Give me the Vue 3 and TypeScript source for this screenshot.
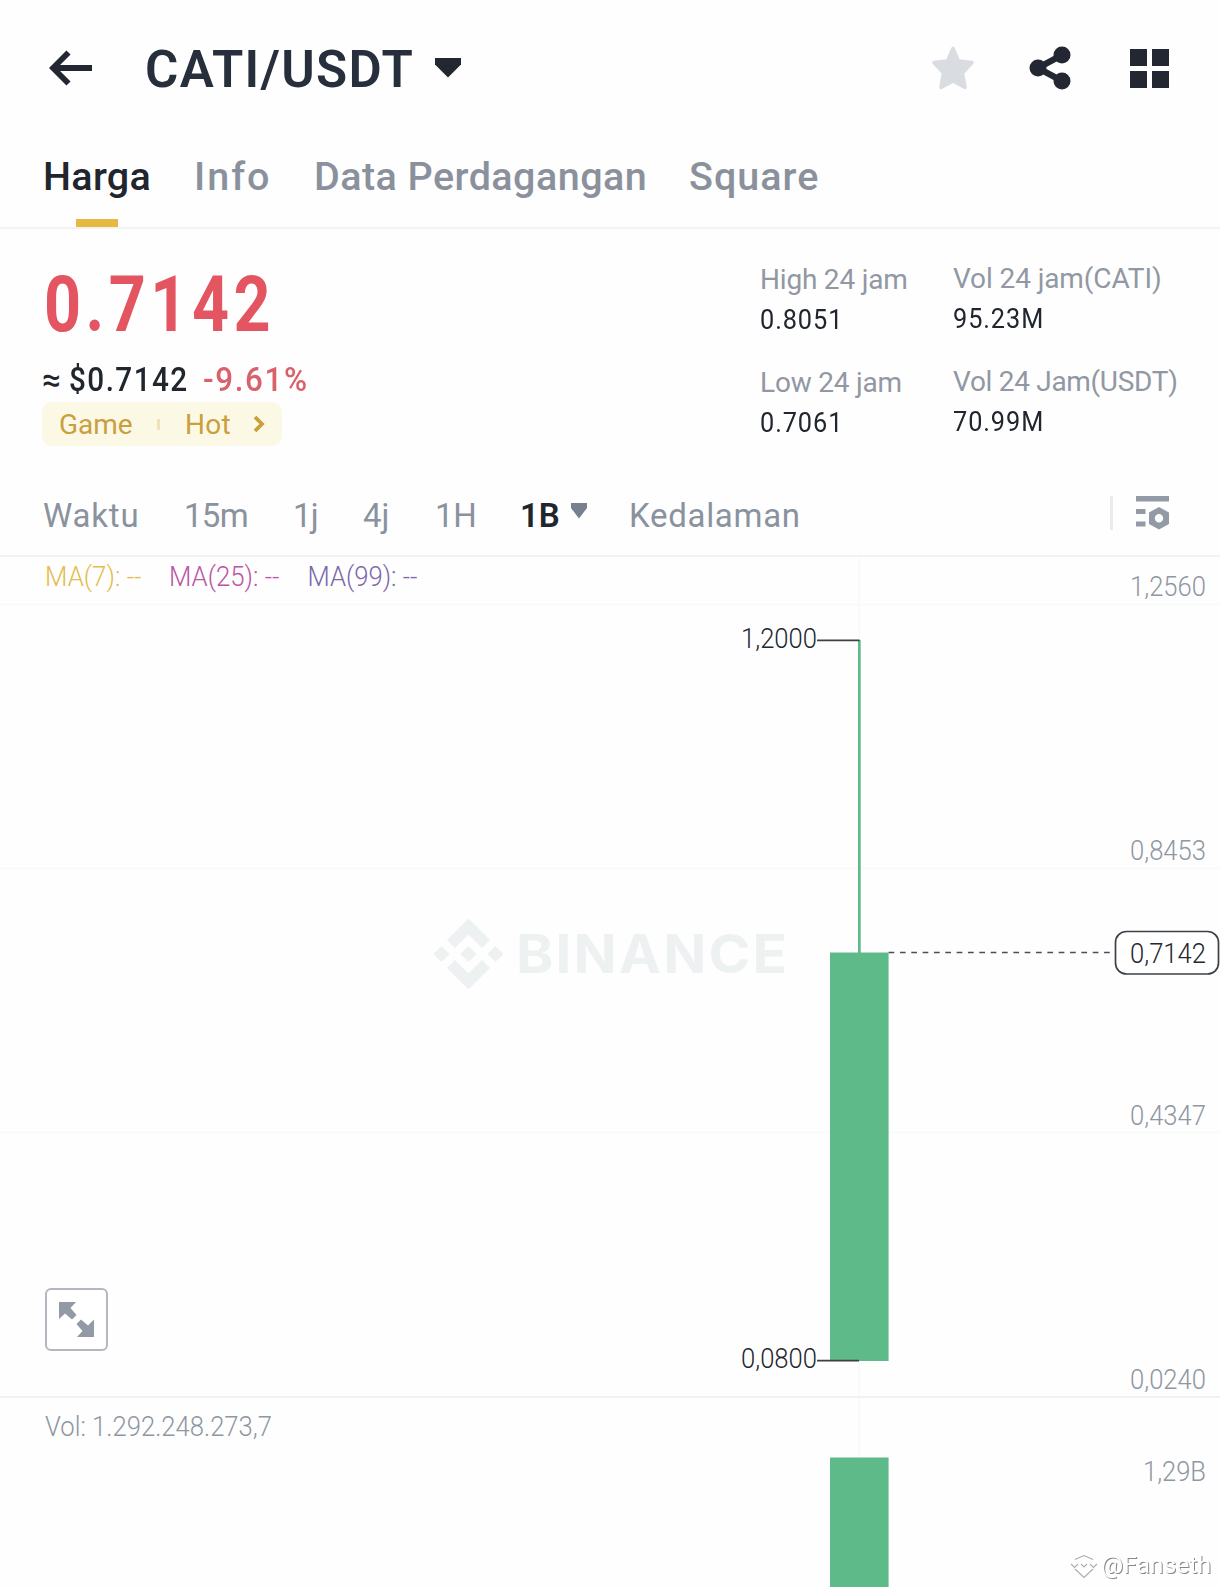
<script setup lang="ts">
interface Item { id: string; label: string; active?: boolean }

const tabs: Item[] = [
  { id: 'price', label: 'Harga', active: true },
  { id: 'info', label: 'Info' },
  { id: 'trades', label: 'Data Perdagangan' },
  { id: 'square', label: 'Square' },
]

const intervals: Item[] = [
  { id: 'time', label: 'Waktu' },
  { id: 'm15', label: '15m' },
  { id: 'h1', label: '1j' },
  { id: 'h4', label: '4j' },
  { id: 'd1', label: '1H' },
  { id: 'mo1', label: '1B', active: true },
  { id: 'depth', label: 'Kedalaman' },
]

const stats = [
  { id: 'high', label: 'High 24 jam', value: '0.8051' },
  { id: 'vol-base', label: 'Vol 24 jam(CATI)', value: '95.23M' },
  { id: 'low', label: 'Low 24 jam', value: '0.7061' },
  { id: 'vol-quote', label: 'Vol 24 Jam(USDT)', value: '70.99M' },
]

const averages = [
  { text: 'MA(7): --', x: 45, width: 96.5, color: '#e3bd4f' },
  { text: 'MA(25): --', x: 169, width: 110.5, color: '#bb55a4' },
  { text: 'MA(99): --', x: 307.5, width: 110, color: '#7c68ab' },
]

const axis = [
  { text: '1,2560', y: 595.5, width: 76 },
  { text: '0,8453', y: 860, width: 76 },
  { text: '0,4347', y: 1124.5, width: 76 },
  { text: '0,0240', y: 1388.7, width: 76 },
  { text: '1,29B', y: 1480.7, width: 63 },
]
const gridRows = [604.5, 868.5, 1132.5]
</script>

<template>
  <main class="screen">
    <header class="header">
      <svg class="back" width="44" height="36" viewBox="0 0 44 36" fill="none" stroke="#222731" stroke-width="5.8">
        <path d="M43 18H4M19.500 2.500L4 18L19.500 33.500" />
      </svg>
      <h1 class="pair">CATI/USDT</h1>
      <svg class="caret" width="26" height="20" viewBox="0 0 26 20"><path d="M0 0h26v6.500L13 19.500 0 6.500z" fill="#222731" /></svg>
      <div class="actions">
        <svg width="42" height="44" viewBox="0 0 42 44">
          <path d="M21 2.500L26.500 15L40 16.500L30.500 27L33 41.500L21 35L9 41.500L11.500 27L2 16.500L15.500 15Z" fill="#d9dce1" stroke="#d9dce1" stroke-width="3.600" stroke-linejoin="round" />
        </svg>
        <svg width="42" height="44" viewBox="0 0 42 44" fill="#222731">
          <path d="M33 9L9 22L33 35" fill="none" stroke="#222731" stroke-width="6.500" />
          <circle cx="33" cy="9" r="8.500" /><circle cx="9" cy="22" r="8.500" /><circle cx="33" cy="35" r="8.500" />
        </svg>
        <svg width="39" height="39" viewBox="0 0 39 39" fill="#222731">
          <path d="M0 0h17v17H0zM22 0h17v17H22zM0 22h17v17H0zM22 22h17v17H22z" />
        </svg>
      </div>
    </header>

    <nav class="tabs">
      <a v-for="t in tabs" :key="t.id" class="tab" :class="[t.id, { active: t.active }]">{{ t.label }}</a>
    </nav>

    <section class="summary">
      <div class="quote">
        <div class="last">0.7142</div>
        <div class="fiat"><span class="approx">≈</span><span class="usd">$0.7142</span><span class="change">-9.61%</span></div>
        <div class="tags">
          <span class="game">Game</span><i class="tag-sep"></i><span class="hot">Hot</span>
          <svg width="12" height="18" viewBox="0 0 12 18" fill="none" stroke="#c9a03c" stroke-width="3.800"><path d="M2 2L9 9L2 16" /></svg>
        </div>
      </div>
      <dl class="stats">
        <div v-for="s in stats" :key="s.id" class="stat" :class="s.id">
          <dt>{{ s.label }}</dt>
          <dd>{{ s.value }}</dd>
        </div>
      </dl>
    </section>

    <nav class="intervals">
      <a v-for="i in intervals" :key="i.id" class="interval" :class="[i.id, { active: i.active }]">
        <span>{{ i.label }}</span>
        <svg v-if="i.active" width="16" height="16" viewBox="0 0 16 16"><path d="M0 0h16v5L8 15.500 0 5z" fill="#76808f" /></svg>
      </a>
      <i class="divider"></i>
      <svg class="settings" width="34" height="36" viewBox="0 0 34 36" fill="#929aa5">
        <path d="M0 1h33v5.500H0zM0 14h9.500v5H0zM0 26.500h9.500v5H0z" />
        <path fill-rule="evenodd" d="M23 12L33 17.500V29L23 34.500L13 29V17.500ZM23 19a4.200 4.200 0 1 0 0 8.400a4.200 4.200 0 1 0 0-8.400Z" />
      </svg>
    </nav>

    <section class="chart">
      <svg class="plot" width="1220" height="1030" viewBox="0 557 1220 1030">
        <g stroke="#f8f9f9" stroke-width="1.500">
          <path v-for="y in gridRows" :key="y" :d="`M0 ${y}H1220`" />
          <path d="M859.200 557V1587" />
        </g>
        <path d="M0 1397H1220" stroke="#f0f1f3" stroke-width="2" />

        <text v-for="m in averages" :key="m.text" :x="m.x" y="585.700" :fill="m.color" :textLength="m.width" lengthAdjust="spacingAndGlyphs">{{ m.text }}</text>
        <text v-for="a in axis" :key="a.text" :x="1206 - a.width" :y="a.y" fill="#8f97a2" :textLength="a.width" lengthAdjust="spacingAndGlyphs">{{ a.text }}</text>
        <text x="45" y="1436" fill="#8f97a2" textLength="227" lengthAdjust="spacingAndGlyphs">Vol: 1.292.248.273,7</text>

        <g fill="#eef1f1">
          <g transform="translate(468.500 954)">
            <path d="M0-35.500L21.500-14L13.500-6L0-19.500L-13.500-6L-21.500-14Z" />
            <path d="M0 35.500L21.500 14L13.500 6L0 19.500L-13.500 6L-21.500 14Z" />
            <path d="M0-8L8 0L0 8L-8 0ZM-27-8L-19 0L-27 8L-35 0ZM27-8L35 0L27 8L19 0Z" />
          </g>
          <text class="brand" x="516" y="973" textLength="273" lengthAdjust="spacingAndGlyphs">BINANCE</text>
        </g>

        <g fill="#5fba89">
          <path d="M858 640h2.700v314h-2.700zM830 952.500h58.600V1361H830zM830 1457.500h58.600V1587H830z" />
        </g>
        <path d="M817 640.300H859.500M817 1360.700H859" stroke="#3c4148" stroke-width="1.800" />
        <text x="741" y="647.700" fill="#23272e" textLength="76" lengthAdjust="spacingAndGlyphs">1,2000</text>
        <text x="741" y="1367.700" fill="#23272e" textLength="76" lengthAdjust="spacingAndGlyphs">0,0800</text>

        <path d="M888.600 952.500H1110" stroke="#4a4e55" stroke-width="1.700" stroke-dasharray="5.700 5.640" />
        <rect x="1115.500" y="931.500" width="103" height="42.500" rx="11" fill="#fff" stroke="#3c4148" stroke-width="1.700" />
        <text x="1130" y="962.500" fill="#23272e" textLength="76" lengthAdjust="spacingAndGlyphs">0,7142</text>

        <g class="credit">
          <path d="M1075 1559.500L1084 1555.500L1093 1559.500M1071 1564L1074.500 1567.500L1078 1564M1081 1564L1084 1567L1087 1564M1090 1564L1093.500 1567.500L1097 1564M1075 1569L1084 1577.500L1093 1569" fill="none" stroke="#a9abae" stroke-width="1.100" />
          <text class="author" x="1101" y="1572.500" textLength="110" lengthAdjust="spacingAndGlyphs">@Fanseth</text>
        </g>
      </svg>
      <button class="expand" type="button" aria-label="Layar penuh">
        <svg width="36" height="36" viewBox="0 0 36 36" fill="#929aa5">
          <path d="M0 0H17L11.500 6L17.500 13L13 17.500L6 11.500L0 17Z" />
          <path d="M35 35H18L23.500 29L17.500 22L22 17.500L29 23.500L35 17.500Z" />
        </svg>
      </button>
    </section>
  </main>
</template>

<style>
body { margin: 0; background: #fefefe; }
</style>

<style scoped>
.screen { width: 1220px; height: 1587px; overflow: hidden; background: #fefefe; font-family: Roboto, "Noto Sans", sans-serif; color: #20252e; box-sizing: border-box; }
svg { display: block; flex: none; }
a, span, dt, dd, h1, .last { white-space: nowrap; }

.header { display: flex; align-items: center; height: 136px; box-sizing: border-box; padding: 0 51px 0 49px; }
.pair { margin: 4px 0 0 52px; width: 290px; font-size: 51px; font-weight: 600; line-height: 60px; letter-spacing: 1.3px; color: #272e3c; }
.caret { margin-top: -1px; }
.actions { display: flex; align-items: center; margin-left: auto; }
.actions svg:nth-child(1) { margin-right: 54.500px; }
.actions svg:nth-child(2) { margin-right: 59.500px; }

.tabs { display: flex; height: 91px; padding-left: 43px; border-bottom: 2px solid #f3f3f4; }
.tab { position: relative; box-sizing: border-box; font-size: 39.500px; line-height: 82px; font-weight: 500; color: #8a919d; letter-spacing: .45px; }
.tab.price { width: 151px; letter-spacing: .3px; }
.tab.info { width: 120px; letter-spacing: 2px; }
.tab.trades { width: 375px; }
.tab.square { letter-spacing: 1px; }
.tab.active { color: #20252e; }
.tab.active::after { content: ""; position: absolute; left: 32.500px; top: 82.500px; width: 42px; height: 8.500px; background: #e6ba41; }

.summary { display: flex; justify-content: space-between; height: 247px; box-sizing: border-box; padding: 31px 21px 0 42px; }
.last { height: 90px; line-height: 91px; font-size: 77px; font-weight: 700; letter-spacing: 5.300px; color: #e35561; transform: scaleX(.84); transform-origin: 0 50%; margin-left: 2px; width: 280px; }
.fiat { display: flex; height: 44px; margin-top: 8px; line-height: 44px; font-size: 33px; font-weight: 500; }
.approx { width: 27px; }
.usd { width: 134px; letter-spacing: 1.600px; transform: scaleX(.9); transform-origin: 0 50%; }
.change { color: #d9616b; letter-spacing: 1.700px; transform: scaleX(.95); transform-origin: 0 50%; }
.tags { display: flex; align-items: center; width: 240px; height: 44px; box-sizing: border-box; padding-left: 17px; border-radius: 10px; background: #fcf8e6; font-size: 28px; color: #c9a03c; }
.game { width: 98px; }
.tag-sep { width: 3px; height: 11px; background: #f0e2b8; margin-right: 25px; }
.hot { width: 68px; letter-spacing: .3px; }
.stats { display: grid; grid-template-columns: 193px 246px; grid-template-rows: 80px 80px; row-gap: 23px; margin: 0; }
.stat dt { font-size: 28px; line-height: 40px; height: 40px; letter-spacing: -.2px; color: #9198a3; }
.stat dd { margin: 0; font-size: 27.500px; line-height: 40px; height: 40px; letter-spacing: 1px; color: #20252e; transform: scaleX(.92); transform-origin: 0 50%; }
.vol-base, .vol-quote { margin-top: -1px; }
.vol-base dt { letter-spacing: -.1px; }
.vol-quote dt { letter-spacing: -.3px; }

.intervals { display: flex; align-items: center; height: 79px; padding-left: 43px; border-bottom: 2px solid #f0f3f4; }
.interval { display: flex; font-size: 33px; line-height: 77px; color: #8a929e; letter-spacing: .3px; }
.interval.time { width: 141px; letter-spacing: .8px; }
.interval.m15 { width: 109px; letter-spacing: -.7px; }
.interval.h1 { width: 70px; letter-spacing: -.7px; }
.interval.h4 { width: 72px; letter-spacing: 0; }
.interval.d1 { width: 85px; letter-spacing: -.3px; }
.interval.mo1 { width: 109px; letter-spacing: 0; }
.interval.depth { letter-spacing: .7px; }
.interval.active { color: #20252e; font-weight: 600; }
.interval.active span { width: 51px; }
.interval.active svg { margin-top: 26px; margin-left: -.5px; }
.divider { width: 3px; height: 34px; margin: -6px 23px 0 auto; background: #e9eced; }
.settings { margin: -5px 50px 0 0; }

.chart { position: relative; height: 1030px; }
.plot { font-size: 27px; font-weight: 300; }
.brand { font-family: Inter, sans-serif; font-size: 54px; font-weight: 700; letter-spacing: 2px; }
.author { font-size: 24px; font-weight: 400; fill: #fff; filter: drop-shadow(1px 1px .3px #85878b); }
.expand { position: absolute; left: 45px; top: 731px; display: flex; align-items: center; justify-content: center; width: 63px; height: 63px; padding: 0; border: 2px solid #b3b8c0; border-radius: 6px; background: #fff; }
</style>
